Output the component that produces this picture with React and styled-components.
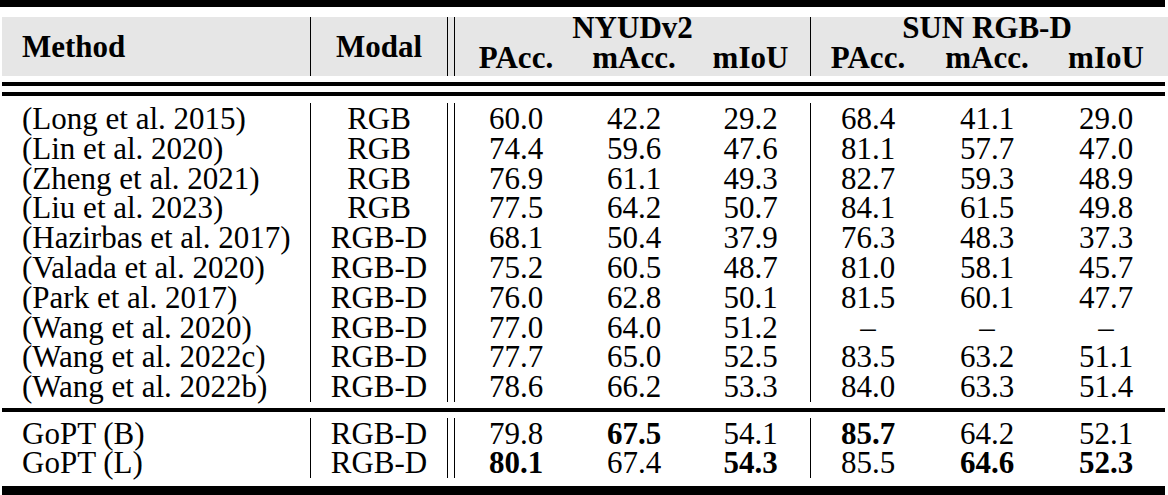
import React from 'react';
import styled, { createGlobalStyle } from 'styled-components';

const Global = createGlobalStyle`
  html, body { margin: 0; padding: 0; background: #fff; }
  body {
    font-family: "Liberation Serif", "Times New Roman", serif;
    color: #000;
    font-size: 31px;
  }
`;

const COLS = '309px 137px 7px 122px 114px 120px 114px 124px 114px';

const Table = styled.div`
  width: 1168px;
  padding-left: 2px;
  box-sizing: border-box;
`;

const Rule = styled.div`
  width: ${p => p.$w || 1161}px;
  height: ${p => p.$h}px;
  margin-top: ${p => p.$mt}px;
  margin-left: ${p => p.$ml || 0}px;
  background: #000;
`;

const Header = styled.div`
  display: grid;
  grid-template-columns: ${COLS};
  grid-template-rows: 21px 38px;
  margin-top: 10px;
  width: 1166px;
  background: #e6e6e6;
  font-weight: 700;
`;

const HeadCell = styled.div`
  grid-row: ${p => p.$row};
  grid-column: ${p => p.$col};
  display: flex;
  align-items: center;
  justify-content: ${p => (p.$left ? 'flex-start' : 'center')};
  padding-left: ${p => (p.$left ? '20px' : '0')};
  border-right: ${p => (p.$divider ? '1px solid #000' : 'none')};
  white-space: nowrap;
  line-height: 1;
`;

const Section = styled.div`
  margin-top: ${p => p.$mt}px;
`;

const Row = styled.div`
  display: grid;
  grid-template-columns: ${COLS};
  height: ${p => p.$h}px;
`;

const Cell = styled.div`
  display: flex;
  align-items: center;
  justify-content: ${p => (p.$left ? 'flex-start' : 'center')};
  padding-left: ${p => (p.$left ? '20px' : '0')};
  border-right: ${p => (p.$divider ? '1px solid #000' : 'none')};
  font-weight: ${p => (p.$bold ? 700 : 400)};
  white-space: nowrap;
  line-height: 1;
`;

const rows = [
  ['(Long et al. 2015)', 'RGB', '60.0', '42.2', '29.2', '68.4', '41.1', '29.0'],
  ['(Lin et al. 2020)', 'RGB', '74.4', '59.6', '47.6', '81.1', '57.7', '47.0'],
  ['(Zheng et al. 2021)', 'RGB', '76.9', '61.1', '49.3', '82.7', '59.3', '48.9'],
  ['(Liu et al. 2023)', 'RGB', '77.5', '64.2', '50.7', '84.1', '61.5', '49.8'],
  ['(Hazirbas et al. 2017)', 'RGB-D', '68.1', '50.4', '37.9', '76.3', '48.3', '37.3'],
  ['(Valada et al. 2020)', 'RGB-D', '75.2', '60.5', '48.7', '81.0', '58.1', '45.7'],
  ['(Park et al. 2017)', 'RGB-D', '76.0', '62.8', '50.1', '81.5', '60.1', '47.7'],
  ['(Wang et al. 2020)', 'RGB-D', '77.0', '64.0', '51.2', '–', '–', '–'],
  ['(Wang et al. 2022c)', 'RGB-D', '77.7', '65.0', '52.5', '83.5', '63.2', '51.1'],
  ['(Wang et al. 2022b)', 'RGB-D', '78.6', '66.2', '53.3', '84.0', '63.3', '51.4'],
];

const ours = [
  { cells: ['GoPT (B)', 'RGB-D', '79.8', '67.5', '54.1', '85.7', '64.2', '52.1'], bold: [3, 5] },
  { cells: ['GoPT (L)', 'RGB-D', '80.1', '67.4', '54.3', '85.5', '64.6', '52.3'], bold: [2, 4, 6, 7] },
];

function DataRow({ cells, bold = [], h }) {
  const [method, modal, ...nums] = cells;
  return (
    <Row $h={h}>
      <Cell $left $divider>{method}</Cell>
      <Cell $divider>{modal}</Cell>
      <Cell $divider />
      {nums.map((n, i) => (
        <Cell key={i} $divider={i === 2} $bold={bold.includes(i + 2)}>
          {n}
        </Cell>
      ))}
    </Row>
  );
}

export default function App() {
  return (
    <>
      <Global />
      <Table>
        <Rule $h={7} $mt={0} $ml={-2} $w={1165} />
        <Header>
          <HeadCell $row="1 / 3" $col="1" $left $divider>Method</HeadCell>
          <HeadCell $row="1 / 3" $col="2" $divider>Modal</HeadCell>
          <HeadCell $row="1 / 3" $col="3" $divider />
          <HeadCell $row="1" $col="4 / 7" $divider>NYUDv2</HeadCell>
          <HeadCell $row="1" $col="7 / 10">SUN RGB-D</HeadCell>
          <HeadCell $row="2" $col="4">PAcc.</HeadCell>
          <HeadCell $row="2" $col="5">mAcc.</HeadCell>
          <HeadCell $row="2" $col="6" $divider>mIoU</HeadCell>
          <HeadCell $row="2" $col="7">PAcc.</HeadCell>
          <HeadCell $row="2" $col="8">mAcc.</HeadCell>
          <HeadCell $row="2" $col="9">mIoU</HeadCell>
        </Header>
        <Rule $h={3.5} $mt={6} $w={1163} />
        <Rule $h={4} $mt={6} $w={1163} />
        <Section $mt={7.6}>
          {rows.map((r, i) => (
            <DataRow key={i} cells={r} h={29.8} />
          ))}
        </Section>
        <Rule $h={3.5} $mt={7} $w={1163} />
        <Section $mt={6}>
          {ours.map((r, i) => (
            <DataRow key={i} cells={r.cells} bold={r.bold} h={29.5} />
          ))}
        </Section>
        <Rule $h={9} $mt={9.5} $w={1163} />
      </Table>
    </>
  );
}
